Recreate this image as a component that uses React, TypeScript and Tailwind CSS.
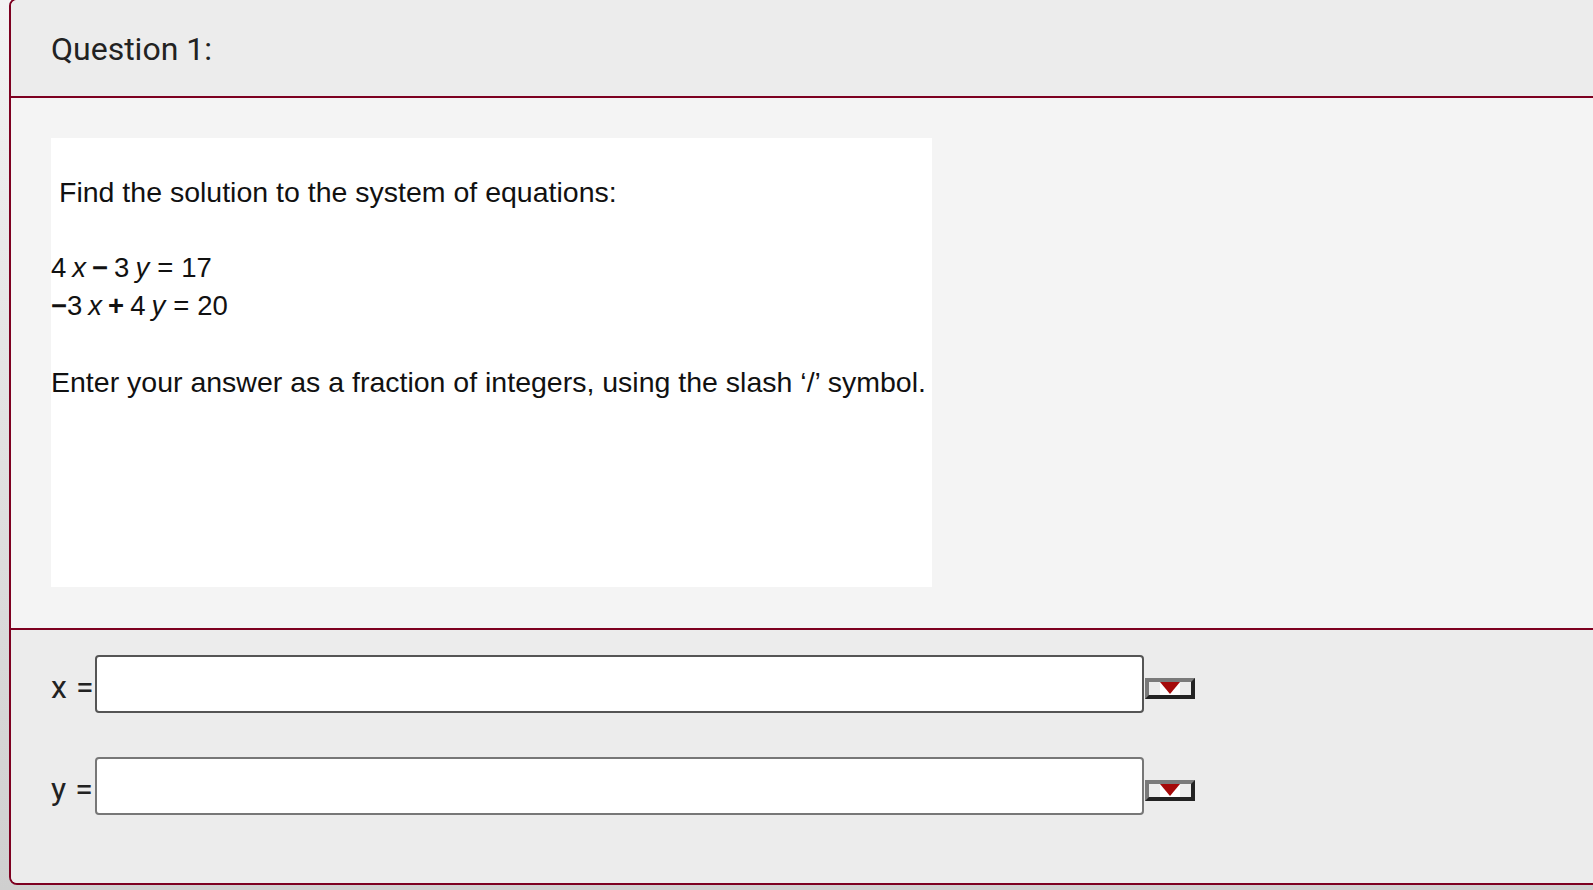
import React from 'react'

function DropButton() {
  return (
    <div className="ml-px mt-[23px] flex h-[21px] w-[50px] shrink-0 border-4 border-t-[#7a7a7a] border-l-[#7a7a7a] border-b-[#222] border-r-[#222] bg-[#ececec]">
      <div className="ml-[11px] flex h-full w-[20px] items-start justify-center bg-white">
        <svg width="20" height="12" viewBox="0 0 20 12">
          <polygon points="0,0 20,0 10,12" fill="#a50a0a" />
        </svg>
      </div>
    </div>
  )
}

function AnswerRow({ label, border }: { label: string; border: string }) {
  return (
    <div className="flex items-start">
      <span className="flex w-[44px] shrink-0 pt-[14px] text-[32px] leading-[36px] text-[#222]">
        {label}
        <span className="ml-[9px]">=</span>
      </span>
      <input
        type="text"
        className={`h-[58px] w-[1049px] shrink-0 rounded-[4px] border-2 bg-white ${border}`}
      />
      <DropButton />
    </div>
  )
}

export default function App() {
  return (
    <div
      className="h-[890px] w-full overflow-hidden bg-gradient-to-b from-[#f3f3f3] to-[#cfcfcf] pl-[9px]"
      style={{ fontFamily: 'Roboto, "Liberation Sans", sans-serif' }}
    >
      <div className="-mt-[2px] w-[1620px] overflow-hidden rounded-[8px] border-2 border-[#7d0020]">
        {/* Header */}
        <div className="h-[96px] bg-[#ececec] pl-[40px] pt-[31px]">
          <h2 className="text-[32px] leading-[36px] text-[#222]">Question 1:</h2>
        </div>

        {/* Question body */}
        <div className="border-t-2 border-[#7d0020] bg-[#f4f4f4] px-[40px] pt-[40px] pb-[41px]">
          <div
            className="h-[449px] w-[881px] bg-white text-[28.5px] text-[#111]"
            style={{ fontFamily: '"Liberation Sans", Arial, sans-serif' }}
          >
            <p className="pl-[8px] pt-[38px] leading-[32px]">Find the solution to the system of equations:</p>
            <div className="mt-[41px] text-[27.5px] leading-[38px]">
              <div>
                4<i className="ml-[6px]">x</i>
                <b className="mx-[6px]">−</b>3<i className="ml-[6px]">y</i>
                <span className="mx-[8px]">=</span>17
              </div>
              <div>
                <b>−</b>3<i className="ml-[6px]">x</i>
                <b className="mx-[6px]">+</b>4<i className="ml-[6px]">y</i>
                <span className="mx-[8px]">=</span>20
              </div>
            </div>
            <p className="mt-[41px] leading-[32px]">Enter your answer as a fraction of integers, using the slash ‘/’ symbol.</p>
          </div>
        </div>

        {/* Answers */}
        <div className="flex h-[255px] flex-col gap-[44px] border-t-2 border-[#7d0020] bg-[#ececec] pl-[40px] pt-[25px]">
          <AnswerRow label="x" border="border-[#555]" />
          <AnswerRow label="y" border="border-[#777]" />
        </div>
      </div>
    </div>
  )
}
